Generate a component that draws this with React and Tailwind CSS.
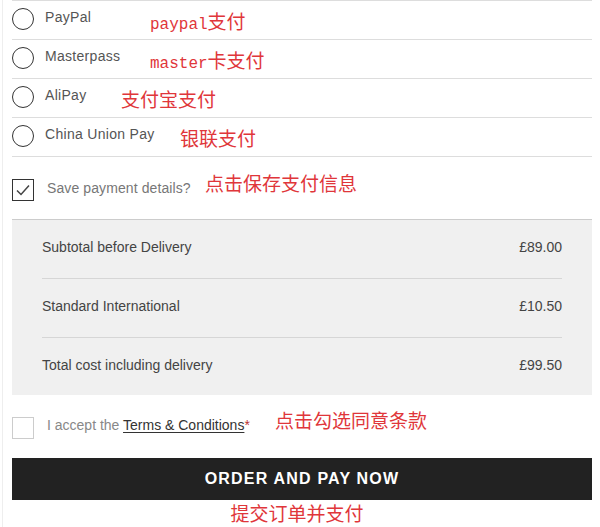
export default function App() {
  const sans = { fontFamily: '"Liberation Sans", Arial, sans-serif' };
  const cjk = '"Noto Sans CJK SC", sans-serif';
  const ann = "absolute text-[#e0363a] text-[19px] leading-none whitespace-nowrap";
  const annStyle = { fontFamily: '"Liberation Mono", "Noto Sans CJK SC", monospace' };
  const rows = [
    { label: "PayPal", mono: "paypal", zh: "支付", left: 150 },
    { label: "Masterpass", mono: "master", zh: "卡支付", left: 150 },
    { label: "AliPay", mono: "", zh: "支付宝支付", left: 121 },
    { label: "China Union Pay", mono: "", zh: "银联支付", left: 180 },
  ];
  const sum = [
    ["Subtotal before Delivery", "£89.00"],
    ["Standard International", "£10.50"],
    ["Total cost including delivery", "£99.50"],
  ];
  return (
    <div className="w-[600px] h-[527px] bg-white overflow-hidden" style={sans}>
      <div className="ml-[2px] h-full border-l border-[#eeeeee]">
        <div className="ml-[9px] w-[580px] relative">
          <div className="border-t border-[#dddddd]">
            {rows.map((r) => (
              <div key={r.label} className="relative h-[39px] border-b border-[#dddddd] flex items-center pb-[2px]">
                <div className="w-[22px] h-[22px] rounded-full border-[1.5px] border-[#333333] shrink-0" />
                <span className="ml-[11px] text-[14px] text-[#555555] tracking-[0.3px] -mt-[3px]">{r.label}</span>
                <span className={ann + " top-[10px]"} style={{ left: r.left - 12, ...annStyle }}>
                  {r.mono && <span className="text-[16px]">{r.mono}</span>}
                  <span style={{ fontFamily: cjk }}>{r.zh}</span>
                </span>
              </div>
            ))}
          </div>
          <div className="relative h-[62px] flex items-center">
            <div className="w-[22px] h-[22px] border-[1.5px] border-[#333333] flex items-center justify-center shrink-0 mt-[3px]">
              <svg width="16" height="14" viewBox="0 0 16 14" fill="none">
                <path d="M2 7.5 L6 11.5 L14 2.5" stroke="#444" strokeWidth="1.5" />
              </svg>
            </div>
            <span className="ml-[13px] text-[14px] text-[#777777] tracking-[0.1px]">Save payment details?</span>
            <span className={ann + " top-[16px] left-[193px]"} style={{ fontFamily: cjk }}>点击保存支付信息</span>
          </div>
          <div className="bg-[#f0f0f0] border-t border-[#cccccc] px-[30px]">
            {sum.map(([l, v], i) => (
              <div
                key={l}
                className={
                  "flex items-center justify-between text-[14px] text-[#444444] pb-[3px] " +
                  (i < 2 ? "h-[59px] border-b border-[#d6d6d6]" : "h-[57px]")
                }
              >
                <span>{l}</span>
                <span>{v}</span>
              </div>
            ))}
          </div>
          <div className="relative h-[63px] flex items-center">
            <div className="w-[22px] h-[22px] border border-[#cccccc] shrink-0 mt-[2px]" />
            <span className="ml-[13px] text-[14px] text-[#888888] -mt-[2px]">
              I accept the{" "}
              <span className="text-[#333333] underline underline-offset-2">Terms &amp; Conditions</span>
              <span className="text-[#b33]">*</span>
            </span>
            <span className={ann + " top-[15px] left-[263px]"} style={{ fontFamily: cjk }}>点击勾选同意条款</span>
          </div>
          <div className="h-[42px] bg-[#222222] flex items-center justify-center text-white font-bold text-[16px] tracking-[1.2px]">
            ORDER AND PAY NOW
          </div>
          <div className="flex justify-center pr-[10px] pt-[1px]">
            <span className="text-[#e0363a] text-[19px] leading-[24px]" style={{ fontFamily: cjk }}>提交订单并支付</span>
          </div>
        </div>
      </div>
    </div>
  );
}
